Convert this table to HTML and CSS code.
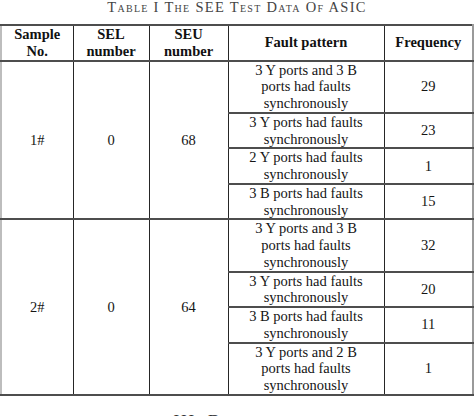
FILE: index.html
```html
<!DOCTYPE html>
<html>
<head>
<meta charset="utf-8">
<link rel="stylesheet" href="styles.css">
</head>
<body>
<div class="page">
  <div class="caption">Table I The SEE Test Data Of ASIC</div>
  <table class="data">
    <colgroup>
      <col class="c1"><col class="c2"><col class="c3"><col class="c4"><col class="c5">
    </colgroup>
    <thead>
      <tr>
        <th>Sample<br>No.</th>
        <th>SEL<br>number</th>
        <th>SEU<br>number</th>
        <th>Fault pattern</th>
        <th>Frequency</th>
      </tr>
    </thead>
    <tbody>
      <tr class="r3">
        <td rowspan="4">1#</td>
        <td rowspan="4">0</td>
        <td rowspan="4">68</td>
        <td>3 Y ports and 3 B<br>ports had faults<br>synchronously</td>
        <td>29</td>
      </tr>
      <tr class="r2">
        <td>3 Y ports had faults<br>synchronously</td>
        <td>23</td>
      </tr>
      <tr class="r2">
        <td>2 Y ports had faults<br>synchronously</td>
        <td>1</td>
      </tr>
      <tr class="r2">
        <td>3 B ports had faults<br>synchronously</td>
        <td>15</td>
      </tr>
      <tr class="r3">
        <td rowspan="4">2#</td>
        <td rowspan="4">0</td>
        <td rowspan="4">64</td>
        <td>3 Y ports and 3 B<br>ports had faults<br>synchronously</td>
        <td>32</td>
      </tr>
      <tr class="r2">
        <td>3 Y ports had faults<br>synchronously</td>
        <td>20</td>
      </tr>
      <tr class="r2">
        <td>3 B ports had faults<br>synchronously</td>
        <td>11</td>
      </tr>
      <tr class="r3">
        <td>3 Y ports and 2 B<br>ports had faults<br>synchronously</td>
        <td>1</td>
      </tr>
    </tbody>
  </table>
  <div class="section">III. Discussion</div>
</div>
</body>
</html>
```
FILE: styles.css
```css
html, body {
  margin: 0;
  padding: 0;
  background: #ffffff;
}

.page {
  width: 474px;
  height: 416px;
  overflow: hidden;
  font-family: "Liberation Serif", "DejaVu Serif", serif;
  color: #151515;
}

.caption {
  font-family: "Liberation Serif", "DejaVu Serif", serif;
  text-align: center;
  font-size: 14.5px;
  line-height: 15px;
  letter-spacing: 1.3px;
  font-variant: small-caps;
  color: #444444;
  margin-bottom: 9px;
}

.data {
  width: 474px;
  border-collapse: collapse;
  table-layout: fixed;
  font-family: "Liberation Serif", "DejaVu Serif", serif;
  font-size: 14.5px;
  line-height: 16.75px;
  border-left: 2px solid #bdbdbd;
  border-right: 2px solid #9a9a9a;
}

.c1 { width: 72px; }
.c2 { width: 76px; }
.c3 { width: 79px; }
.c4 { width: 156px; }
.c5 { width: auto; }

.data th,
.data td {
  font-family: "Liberation Serif", "DejaVu Serif", serif;
  padding: 0;
  text-align: center;
  vertical-align: middle;
  border-top: 2px solid #4d4d4d;
  border-bottom: 2px solid #4d4d4d;
  border-left: 1px solid #262626;
  border-right: 1px solid #262626;
}

.data th {
  font-weight: bold;
  color: #111111;
}

.data tr > :first-child {
  border-left: 2px solid #bdbdbd;
}

.data tr > :last-child {
  border-right: 2px solid #9a9a9a;
}

.data tbody tr.r2 > :first-child,
.data tbody tr:last-child > :first-child {
  border-left: 1px solid #262626;
}

.section {
  font-family: "Liberation Serif", "DejaVu Serif", serif;
  margin-top: 15px;
  text-align: center;
  font-size: 17px;
  line-height: 19px;
  letter-spacing: 1.8px;
  font-variant: small-caps;
  color: #333333;
}
```
